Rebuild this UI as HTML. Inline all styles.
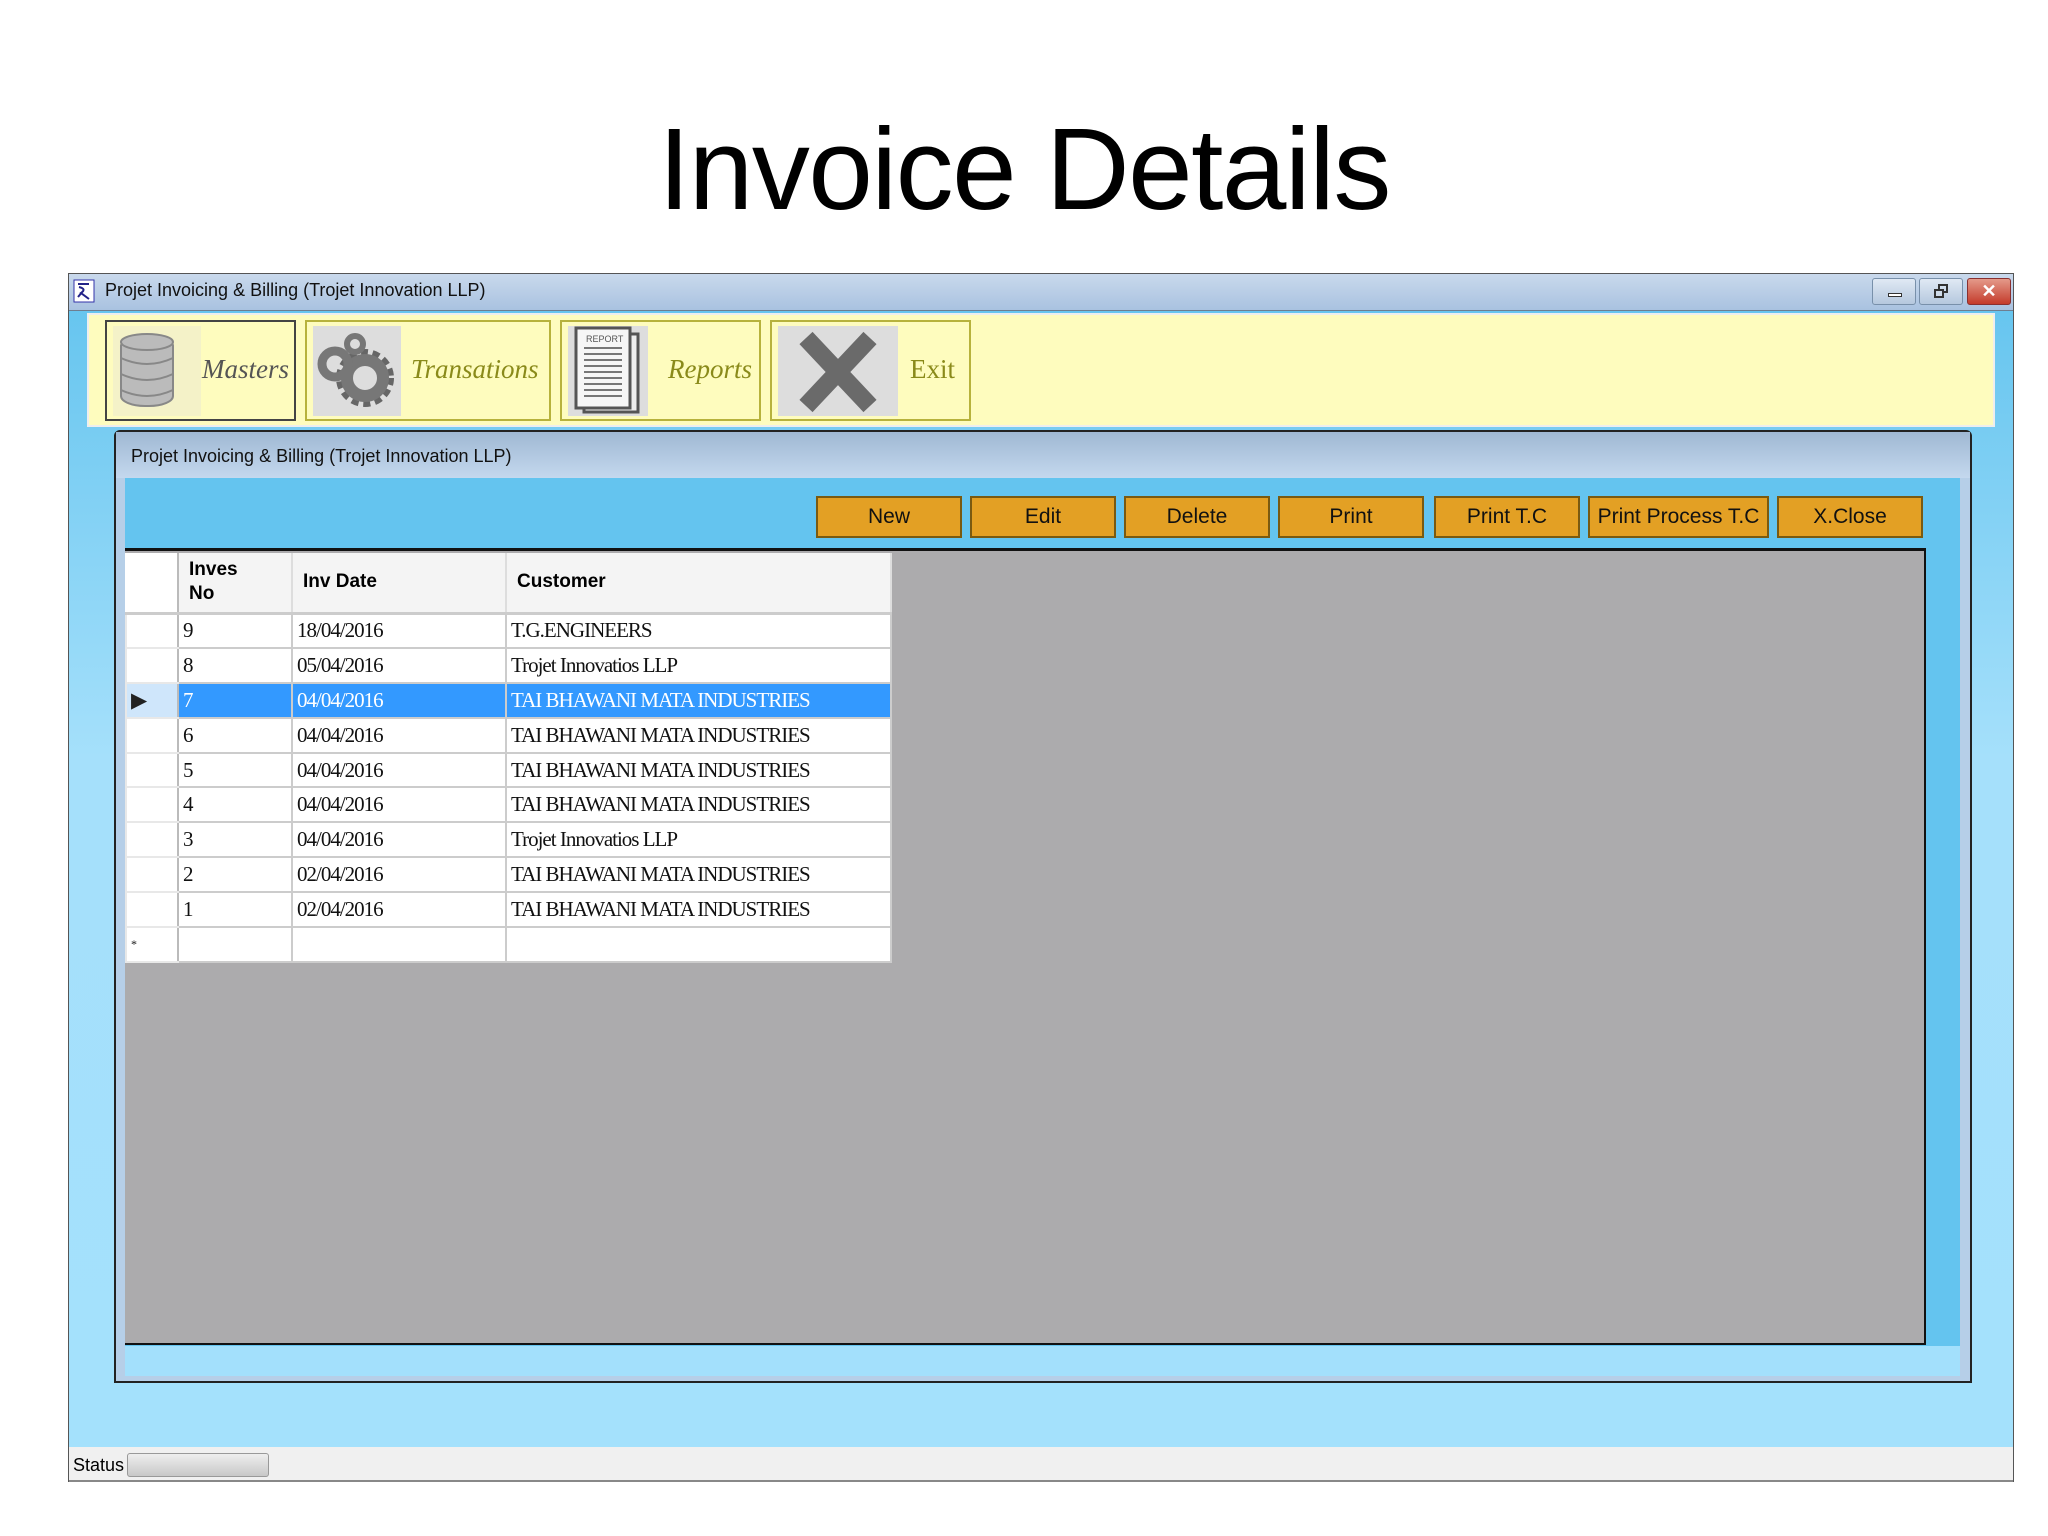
<!DOCTYPE html>
<html><head><meta charset="utf-8"><style>
*{margin:0;padding:0;box-sizing:border-box}
body{width:2048px;height:1536px;background:#fff;position:relative;overflow:hidden;font-family:"Liberation Sans",sans-serif}
.a{position:absolute}
h1{position:absolute;left:0;width:2048px;top:102px;text-align:center;font-weight:normal;font-size:116px;color:#000;letter-spacing:-1.5px}
.win{left:68px;top:273px;width:1946px;height:1209px;border:1px solid #555;background:linear-gradient(#62c3ee,#a5e0fb 40%,#a4e1fc)}
.tb{left:0;top:0;width:100%;height:37px;background:linear-gradient(#c9d9ec,#a9c2e0);border-bottom:1px solid #6e7e90;font-size:18px;color:#111;padding:6px 0 0 36px;font-family:"Liberation Sans Narrow","Liberation Sans",sans-serif}
.yb{left:18px;top:39px;width:1908px;height:114px;background:#fefcbe;border:2px solid #eee}
.tbtn{top:5px;height:101px;border:2px solid #b7b23c;background:#fefcbe}
.tbtn .ic{position:absolute;left:6px;top:4px;width:88px;height:90px;background:#ddd}
.tbtn span{position:absolute;font-family:"Liberation Serif",serif;font-style:italic;font-size:27px;color:#555;top:32px}
.mdi{left:45px;top:156px;width:1858px;height:953px;border:2px solid #222;border-radius:6px 6px 0 0;background:#b6cfe8}
.mtb{left:0;top:0;width:100%;height:46px;background:linear-gradient(#9fb8d3,#c4d8ee);font-size:18px;padding:14px 0 0 15px;color:#111;font-family:"Liberation Sans Narrow","Liberation Sans",sans-serif}
.pan{left:9px;top:46px;width:1835px;height:898px;background:#64c4ef}
.btn{top:18px;height:42px;background:#e3a024;border:2px solid #7a5a10;font-size:21px;text-align:center;line-height:38px;color:#111}
.grid{left:0;top:70px;width:1801px;height:797px;background:#acabad;border-top:3px solid #111;border-right:2px solid #111;border-bottom:2px solid #111}
table{position:absolute;left:0;top:2px;border-collapse:collapse;background:#fff}
td{height:34.9px;border:2px solid #ccc;font-family:"Liberation Serif",serif;font-size:21px;padding:0 4px;letter-spacing:-1px;color:#111;white-space:nowrap}
th{height:60px;background:#f4f4f4;text-align:left;font-size:19px;padding:0 10px;border-right:2px solid #ddd;border-bottom:3px solid #ccc;font-family:"Liberation Sans Narrow","Liberation Sans",sans-serif}
td.rh{background:#fff;border-color:#e8e8e8;border-right:2px solid #bbb;width:52px}
tr.sel td{background:#3399ff;color:#fff}
tr.sel td.rh{background:#cfe6fb}
.st{left:0;top:1173px;width:100%;height:35px;background:#f0f0f0;border-bottom:2px solid #888}
.wb{top:4px;height:27px;width:44px;border:1px solid #7890aa;border-radius:3px;background:linear-gradient(#e0e9f4,#b5c8de)}
</style></head><body>
<h1>Invoice Details</h1>
<div class="a win">
 <div class="a tb"><svg class="a" style="left:4px;top:5px" width="22" height="24"><rect x="1" y="1" width="20" height="22" fill="#fff" stroke="#33a"/><path d="M5 5 L16 5 M6 8 Q14 10 8 14 L16 20 M5 18 L10 12" stroke="#228" stroke-width="2" fill="none"/></svg>Projet Invoicing &amp; Billing (Trojet Innovation LLP)
  <div class="a wb" style="right:97px"><div class="a" style="left:15px;top:14px;width:14px;height:4px;border:1px solid #333;background:#fff"></div></div>
  <div class="a wb" style="right:50px"><div class="a" style="left:18px;top:5px;width:10px;height:9px;border:2px solid #333"></div><div class="a" style="left:14px;top:10px;width:10px;height:9px;border:2px solid #333;background:#d0dcea"></div></div>
  <div class="a wb" style="right:2px;border-color:#8a3030;background:linear-gradient(#e49a8a,#c43b2b);color:#fff;font-weight:bold;font-size:18px;text-align:center;line-height:25px">✕</div>
 </div>
 <div class="a yb">
  <div class="a tbtn" style="left:16px;width:191px;border-color:#444"><div class="ic" style="background:#f4f2c8"><svg width="88" height="90"><g fill="#bbb" stroke="#888" stroke-width="2"><rect x="8" y="10" width="52" height="70" rx="24" ry="10"/><ellipse cx="34" cy="16" rx="26" ry="8"/><path d="M8 32 Q34 44 60 32 M8 48 Q34 60 60 48 M8 64 Q34 76 60 64" fill="none"/></g></svg></div><span style="left:95px">Masters</span></div>
  <div class="a tbtn" style="left:216px;width:246px"><div class="ic"><svg width="88" height="90"><circle cx="52" cy="52" r="22" fill="none" stroke="#666" stroke-width="14" stroke-dasharray="6 4"/><circle cx="52" cy="52" r="18" fill="none" stroke="#777" stroke-width="12"/><circle cx="22" cy="38" r="13" fill="none" stroke="#777" stroke-width="9"/><circle cx="42" cy="18" r="8" fill="none" stroke="#777" stroke-width="6"/></svg></div><span style="left:104px;color:#8a8a1a">Transations</span></div>
  <div class="a tbtn" style="left:471px;width:201px"><div class="ic" style="width:80px"><svg width="80" height="90"><rect x="16" y="8" width="54" height="78" fill="#eee" stroke="#555" stroke-width="3"/><rect x="8" y="2" width="54" height="80" fill="#f6f6f6" stroke="#555" stroke-width="3"/><g stroke="#777" stroke-width="2"><path d="M16 22h38M16 28h38M16 34h38M16 40h38M16 46h38M16 52h38M16 58h38M16 64h38M16 70h38"/></g><text x="18" y="16" font-size="9" fill="#555" font-family="Liberation Sans">REPORT</text></svg></div><span style="left:106px;color:#8a8a1a">Reports</span></div>
  <div class="a tbtn" style="left:681px;width:201px"><div class="ic" style="width:120px"><svg width="120" height="90"><path d="M28 12 L92 80 M92 12 L28 80" stroke="#6a6a6a" stroke-width="18"/></svg></div><span style="left:138px;font-style:normal;color:#8a8a1a">Exit</span></div>
 </div>
 <div class="a mdi">
  <div class="a mtb">Projet Invoicing &amp; Billing (Trojet Innovation LLP)</div>
  <div class="a pan">
   <div class="a btn" style="left:691px;width:146px">New</div>
   <div class="a btn" style="left:845px;width:146px">Edit</div>
   <div class="a btn" style="left:999px;width:146px">Delete</div>
   <div class="a btn" style="left:1153px;width:146px">Print</div>
   <div class="a btn" style="left:1309px;width:146px">Print T.C</div>
   <div class="a btn" style="left:1463px;width:181px">Print Process T.C</div>
   <div class="a btn" style="left:1652px;width:146px">X.Close</div>
   <div class="a grid">
    <table>
     <tr><th style="width:52px;background:#fff;border-right:2px solid #bbb"></th><th style="width:114px;line-height:24px">Inves<br>No</th><th style="width:214px">Inv Date</th><th style="width:385px">Customer</th></tr>
     <tr><td class="rh"></td><td>9</td><td>18/04/2016</td><td>T.G.ENGINEERS</td></tr>
     <tr><td class="rh"></td><td>8</td><td>05/04/2016</td><td>Trojet Innovatios LLP</td></tr>
     <tr class="sel"><td class="rh" style="color:#222">▶</td><td>7</td><td>04/04/2016</td><td>TAI BHAWANI MATA INDUSTRIES</td></tr>
     <tr><td class="rh"></td><td>6</td><td>04/04/2016</td><td>TAI BHAWANI MATA INDUSTRIES</td></tr>
     <tr><td class="rh"></td><td>5</td><td>04/04/2016</td><td>TAI BHAWANI MATA INDUSTRIES</td></tr>
     <tr><td class="rh"></td><td>4</td><td>04/04/2016</td><td>TAI BHAWANI MATA INDUSTRIES</td></tr>
     <tr><td class="rh"></td><td>3</td><td>04/04/2016</td><td>Trojet Innovatios LLP</td></tr>
     <tr><td class="rh"></td><td>2</td><td>02/04/2016</td><td>TAI BHAWANI MATA INDUSTRIES</td></tr>
     <tr><td class="rh"></td><td>1</td><td>02/04/2016</td><td>TAI BHAWANI MATA INDUSTRIES</td></tr>
     <tr><td class="rh" style="font-size:12px">*</td><td></td><td></td><td></td></tr>
    </table>
   </div>
   <div class="a" style="left:0;top:868px;width:1835px;height:30px;background:#a3e0fc"></div>
  </div>
 </div>
 <div class="a st"><span class="a" style="left:4px;top:8px;font-size:18px;font-family:'Liberation Sans Narrow','Liberation Sans',sans-serif">Status</span><div class="a" style="left:58px;top:6px;width:142px;height:24px;border:1px solid #999;border-radius:3px;background:linear-gradient(#eee,#c8c8c8)"></div></div>
</div>
</body></html>
